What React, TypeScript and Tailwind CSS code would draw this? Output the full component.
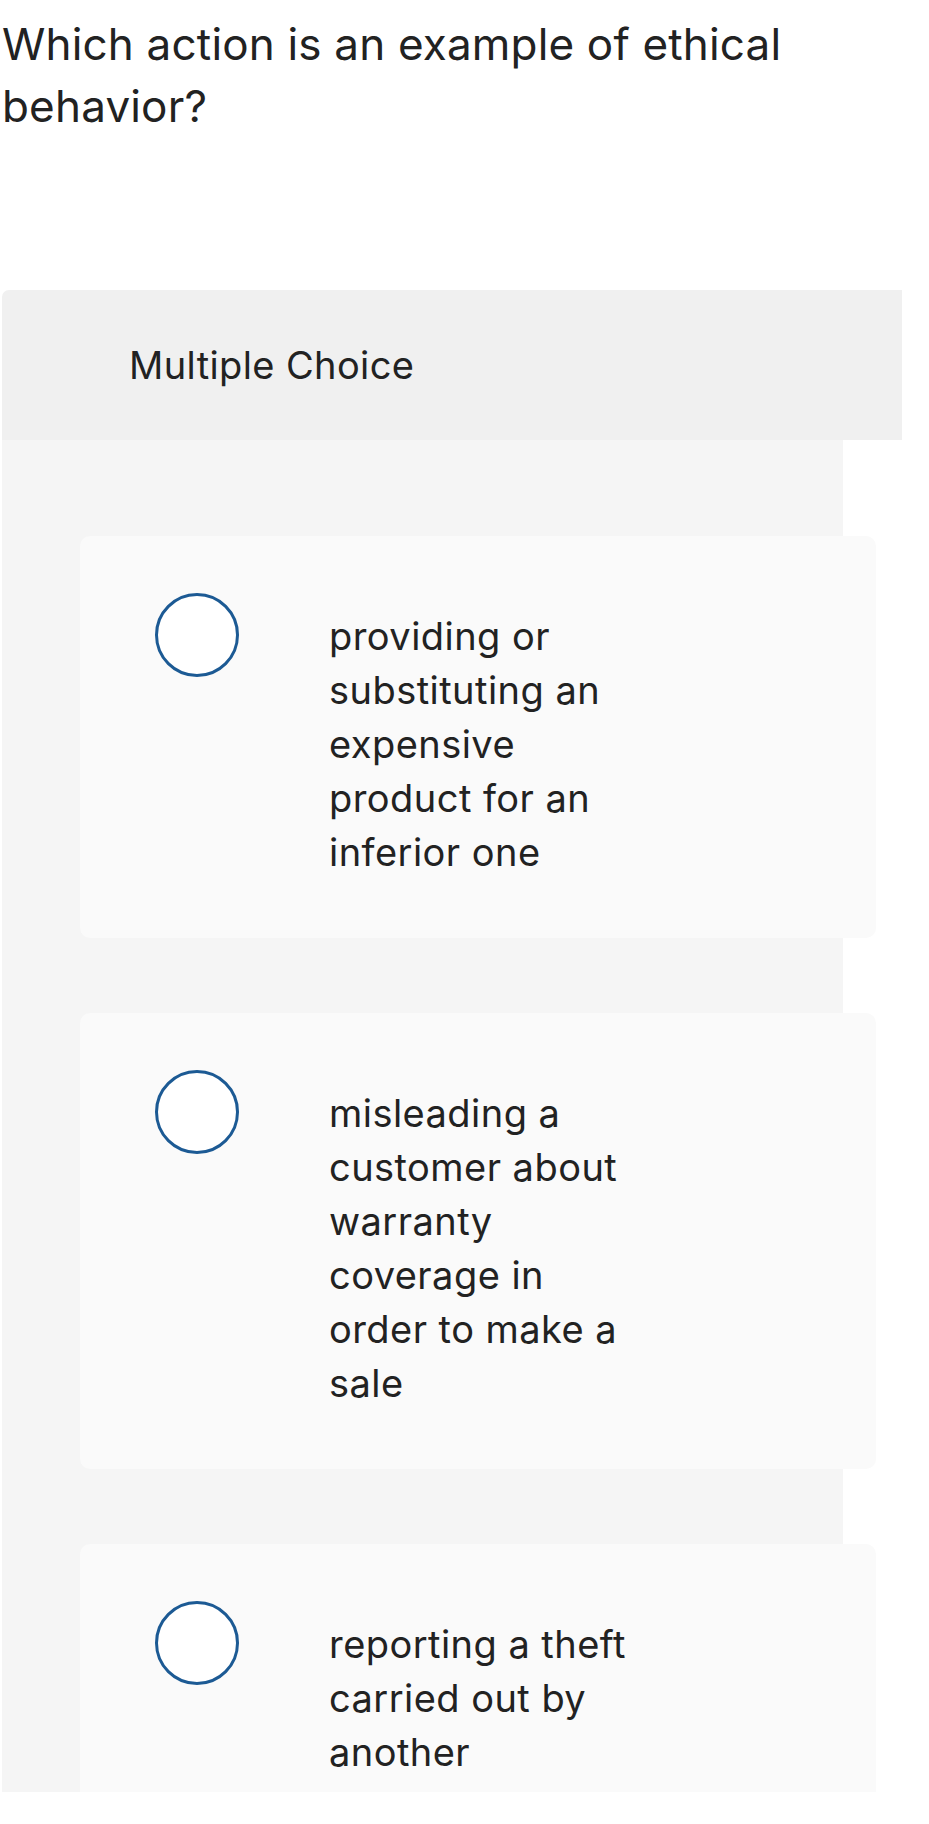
import React from "react";

const options = [
  "providing or substituting an expensive product for an inferior one",
  "misleading a customer about warranty coverage in order to make a sale",
  "reporting a theft carried out by another",
];

function Option({ text }: { text: string }) {
  return (
    <div className="w-[796px] ml-[78px] bg-[#fafafa] rounded-[10px] pt-[57px] pb-[59px] pl-[75px] flex items-start shrink-0">
      <div className="w-[84px] h-[84px] rounded-full border-[3px] border-[#1c5a94] bg-white shrink-0" />
      <div className="ml-[90px] mt-[16px] w-[316px] text-[38px] leading-[54px] tracking-[0.012em] text-[#222222]">
        {text}
      </div>
    </div>
  );
}

export default function App() {
  return (
    <div
      className="bg-white w-full h-[1792px] overflow-hidden"
      style={{ fontFamily: "Inter, 'Noto Sans', sans-serif" }}
    >
      <div className="ml-[2px] flex flex-col h-full">
        <h1 className="mt-[13px] text-[44px] leading-[62px] tracking-[0.004em] text-[#222222] font-normal w-[820px]">
          Which action is an example of ethical behavior?
        </h1>
        <div className="mt-[153px] w-[900px] h-[150px] bg-[#f0f0f0] rounded-tl-[7px] flex items-center pl-[127px] shrink-0">
          <span className="text-[38px] leading-[46px] tracking-[0.01em] text-[#222222]">Multiple Choice</span>
        </div>
        <div className="w-[841px] flex-1 bg-[#f5f5f5] pt-[96px] flex flex-col gap-[75px]">
          {options.map((o) => (
            <Option key={o} text={o} />
          ))}
        </div>
      </div>
    </div>
  );
}
